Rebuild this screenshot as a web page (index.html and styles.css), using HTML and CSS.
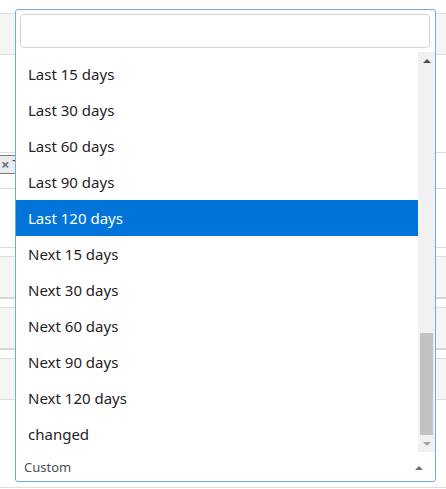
FILE: index.html
```html
<!DOCTYPE html>
<html>
<head>
<meta charset="utf-8">
<link rel="stylesheet" href="styles.css">
</head>
<body>
<div class="page">
  <div class="row r-a"></div>
  <div class="row r-b shaded"></div>
  <div class="row r-c"></div>
  <div class="row r-d"><span class="chip"><span class="chip-x">×</span><span class="chip-t">T</span></span></div>
  <div class="row r-e"></div>
  <div class="row r-f"></div>
  <div class="row r-g shaded dark"></div>
  <div class="row r-h"></div>
  <div class="row r-i shaded dark"></div>
  <div class="row r-j"></div>
  <div class="row r-k shaded"></div>
  <div class="row r-l"></div>
</div>

<div class="popup">
  <div class="search"><input class="search-input" type="text"></div>
  <div class="list">
    <ul class="options">
      <li class="opt">Last 15 days</li>
      <li class="opt">Last 30 days</li>
      <li class="opt">Last 60 days</li>
      <li class="opt">Last 90 days</li>
      <li class="opt active">Last 120 days</li>
      <li class="opt">Next 15 days</li>
      <li class="opt">Next 30 days</li>
      <li class="opt">Next 60 days</li>
      <li class="opt">Next 90 days</li>
      <li class="opt">Next 120 days</li>
      <li class="opt">changed</li>
    </ul>
    <div class="scrollbar">
      <div class="sb-btn"><span class="tri-up"></span></div>
      <div class="sb-track"><div class="sb-thumb"></div></div>
      <div class="sb-btn"><span class="tri-down"></span></div>
    </div>
  </div>
  <div class="footer">
    <span class="footer-label">Custom</span>
    <span class="footer-tri"></span>
  </div>
</div>
</body>
</html>
```

FILE: styles.css
```css
* { box-sizing: border-box; }
html, body { margin: 0; padding: 0; background: #fff; }
body {
  width: 446px;
  height: 489px;
  overflow: hidden;
  position: relative;
  font-family: "Noto Sans", "Open Sans", sans-serif;
  color: #212529;
}

.page { display: flex; flex-direction: column; }
.row { border-bottom: 1px solid #dedede; }
.shaded { background: #f5f5f5; }
.dark { border-bottom: 2px solid #d6d6d6; }
.r-a { height: 14px; }
.r-b { height: 41px; }
.r-c { height: 98px; }
.r-d { height: 36px; display: flex; align-items: flex-start; padding-top: 2px; }
.r-e { height: 59px; }
.r-f { height: 9px; }
.r-g { height: 42px; }
.r-h { height: 9px; }
.r-i { height: 42px; }
.r-j { height: 9px; }
.r-k { height: 41px; }
.r-l { height: 88px; }

.chip {
  margin-left: -4px;
  height: 19px;
  display: flex;
  align-items: center;
  gap: 3px;
  padding: 0 6px 0 4px;
  background: #e9ecef;
  border: 1px solid #7a7a7a;
  font-size: 15px;
  line-height: 1;
}
.chip-x { color: #6c757d; font-weight: bold; }
.chip-t { color: #5a3e2b; }

.popup {
  position: absolute;
  left: 15px;
  top: 9px;
  width: 421px;
  height: 473px;
  border: 1px solid #6fa9e8;
  border-radius: 3px;
  background: #fff;
  display: flex;
  flex-direction: column;
}

.search { padding: 4px 5px 4px 4px; }
.search-input {
  display: block;
  width: 100%;
  height: 34px;
  border: 1px solid #cfd4da;
  border-radius: 4px;
  background: #fff;
  outline: none;
}

.list { height: 400px; display: flex; overflow: hidden; }
.options {
  flex: 1;
  list-style: none;
  margin: 0;
  padding: 4px 0 0 0;
}
.opt {
  height: 36px;
  line-height: 36px;
  padding-left: 12px;
  font-size: 15px;
  color: #1f2326;
  white-space: nowrap;
}
.opt.active { background: #0074d9; color: #fff; }

.scrollbar {
  width: 17px;
  background: #f1f1f1;
  display: flex;
  flex-direction: column;
}
.sb-btn {
  height: 17px;
  display: flex;
  align-items: center;
  justify-content: center;
}
.sb-track { flex: 1; display: flex; flex-direction: column; justify-content: flex-end; padding: 0 2px; }
.sb-thumb { height: 102px; background: #c1c1c1; }

.tri-up {
  width: 0; height: 0;
  border-left: 4px solid transparent;
  border-right: 4px solid transparent;
  border-bottom: 4px solid #505050;
}
.tri-down {
  width: 0; height: 0;
  border-left: 4px solid transparent;
  border-right: 4px solid transparent;
  border-top: 4px solid #a3a3a3;
}

.footer {
  flex: 1;
  display: flex;
  align-items: center;
  justify-content: space-between;
  padding: 0 12px 0 8px;
}
.footer-label { font-size: 13px; color: #495057; }
.footer-tri {
  width: 0; height: 0;
  border-left: 4px solid transparent;
  border-right: 4px solid transparent;
  border-bottom: 4px solid #6c757d;
  margin-top: 2px;
}
```
